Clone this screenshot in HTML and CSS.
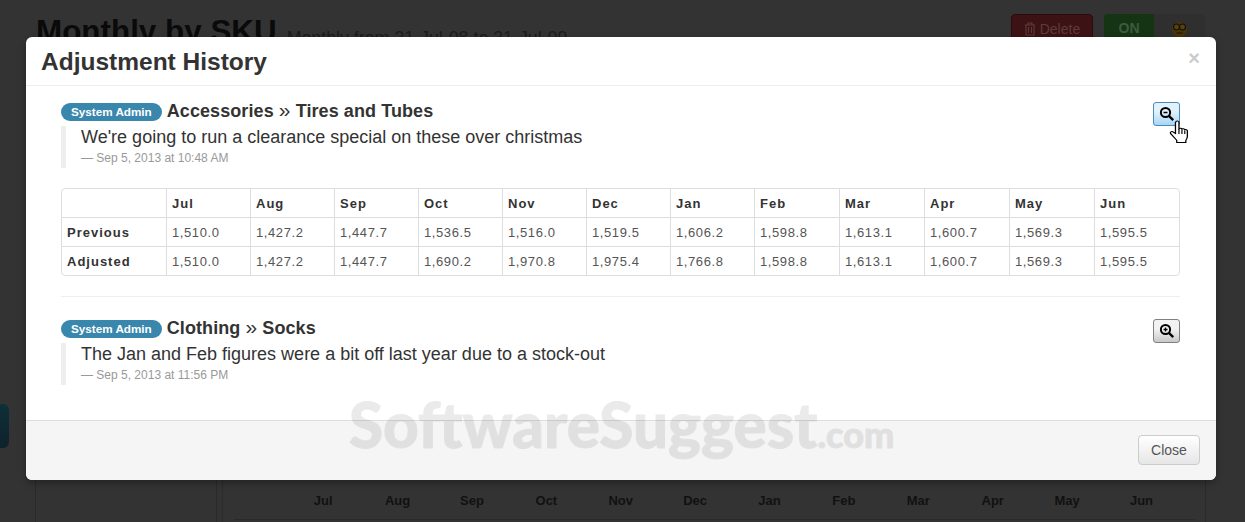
FILE: index.html
```html
<!DOCTYPE html>
<html lang="en">
<head>
    <meta charset="UTF-8">
    <meta name="viewport" content="width=device-width, initial-scale=1.0">
    <title>Adjustment History</title>
    <link rel="stylesheet" href="styles.css">
</head>
<body>
    <div class="page">
        <div class="page-head">
            <h1>Monthly by SKU</h1>
            <span class="page-sub">Monthly from 31-Jul-08 to 31-Jul-09</span>
            <button class="btn-delete">
                <svg class="trash" viewBox="0 0 12 14" width="12" height="14"><path d="M1 3h10M4 3V1h4v2M2 3v10h8V3M4.500 5v6M7.500 5v6" fill="none" stroke="currentColor" stroke-width="1.100"/></svg>
                Delete
            </button>
            <div class="toggle">
                <span class="toggle-on">ON</span>
                <span class="toggle-off">
                    <svg viewBox="0 0 18 18" width="18" height="18"><circle cx="8.500" cy="9.500" r="7.500" fill="#4d3500"/><circle cx="5.500" cy="7" r="3" fill="#54420f" stroke="#111" stroke-width="1.100"/><circle cx="11.500" cy="7" r="3" fill="#54420f" stroke="#111" stroke-width="1.100"/><path d="M5.500 13h6" stroke="#111"/></svg>
                </span>
            </div>
        </div>
        <div class="page-main">
            <div class="side-col"></div>
            <div class="main-col">
                <div class="month-row">
                    <span>Jul</span><span>Aug</span><span>Sep</span><span>Oct</span><span>Nov</span><span>Dec</span><span>Jan</span><span>Feb</span><span>Mar</span><span>Apr</span><span>May</span><span>Jun</span>
                </div>
            </div>
        </div>
    </div>
    <div class="side-tab"></div>

    <div class="modal">
        <div class="modal-header">
            <h3>Adjustment History</h3>
            <span class="modal-x">×</span>
        </div>
        <div class="modal-body">
            <div class="entry">
                <div class="entry-top">
                    <div>
                        <div class="entry-title">
                            <span class="pill">System Admin</span>
                            <span class="crumb">Accessories <span class="sep">»</span> Tires and Tubes</span>
                        </div>
                        <div class="quote">
                            <p>We're going to run a clearance special on these over christmas</p>
                            <small>— Sep 5, 2013 at 10:48 AM</small>
                        </div>
                    </div>
                    <button class="zoom-btn zoom-btn-hover">
                        <svg viewBox="0 0 16 16" width="16" height="16"><circle cx="6.500" cy="6.500" r="4.600" fill="none" stroke="#000" stroke-width="2"/><path d="M4.500 6.500h4" stroke="#000" stroke-width="1.400"/><path d="M10 10l4.200 4.200" stroke="#000" stroke-width="2.400"/></svg>
                    </button>
                </div>
                <table class="adj-table">
                    <thead>
                        <tr><th></th><th>Jul</th><th>Aug</th><th>Sep</th><th>Oct</th><th>Nov</th><th>Dec</th><th>Jan</th><th class="wide">Feb</th><th class="wide">Mar</th><th class="wide">Apr</th><th class="wide">May</th><th class="wide">Jun</th></tr>
                    </thead>
                    <tbody>
                        <tr><th>Previous</th><td>1,510.0</td><td>1,427.2</td><td>1,447.7</td><td>1,536.5</td><td>1,516.0</td><td>1,519.5</td><td>1,606.2</td><td>1,598.8</td><td>1,613.1</td><td>1,600.7</td><td>1,569.3</td><td>1,595.5</td></tr>
                        <tr><th>Adjusted</th><td>1,510.0</td><td>1,427.2</td><td>1,447.7</td><td>1,690.2</td><td>1,970.8</td><td>1,975.4</td><td>1,766.8</td><td>1,598.8</td><td>1,613.1</td><td>1,600.7</td><td>1,569.3</td><td>1,595.5</td></tr>
                    </tbody>
                </table>
            </div>
            <hr class="divider">
            <div class="entry">
                <div class="entry-top">
                    <div>
                        <div class="entry-title">
                            <span class="pill">System Admin</span>
                            <span class="crumb">Clothing <span class="sep">»</span> Socks</span>
                        </div>
                        <div class="quote">
                            <p>The Jan and Feb figures were a bit off last year due to a stock-out</p>
                            <small>— Sep 5, 2013 at 11:56 PM</small>
                        </div>
                    </div>
                    <button class="zoom-btn">
                        <svg viewBox="0 0 16 16" width="16" height="16"><circle cx="6.500" cy="6.500" r="4.600" fill="none" stroke="#000" stroke-width="2"/><path d="M4.500 6.500h4M6.500 4.500v4" stroke="#000" stroke-width="1.300"/><path d="M10 10l4.200 4.200" stroke="#000" stroke-width="2.400"/></svg>
                    </button>
                </div>
            </div>
        </div>
        <div class="modal-footer">
            <button class="btn-close">Close</button>
        </div>
    </div>

    <div class="watermark">SoftwareSuggest<span>.com</span></div>

    <svg class="hand-cursor" viewBox="0 0 17 24" width="22" height="24" preserveAspectRatio="none">
        <path d="M5.500 1.500c.9-.9 2.200-.4 2.200.9v6.200c.5-.6 2-.6 2.300.4.6-.5 1.900-.3 2.200.7.700-.3 2 .1 2 1.400v5.200c0 2-.6 3.100-1.200 4.200v2H6v-2.200L1.300 13.600c-.8-1.100.4-2.500 1.700-1.800l2 1.700V2.400z" fill="#fff" stroke="#000" stroke-width="1"/>
        <path d="M7.700 9v5M10 9.500v4.500M12.200 10.500V14" stroke="#000" stroke-width=".9" fill="none"/>
    </svg>
</body>
</html>
```

FILE: styles.css
```css
html, body {
    margin: 0;
    height: 100%;
    overflow: hidden;
}

body {
    font-family: "Liberation Sans", Arial, sans-serif;
    background-color: #333;
    color: #333;
}

/* dimmed page behind the modal */
.page {
    height: 522px;
    display: flex;
    flex-direction: column;
    background-color: #333;
}

.page-head {
    display: flex;
    align-items: flex-start;
    height: 76px;
    padding: 14px 40px 0 36px;
    flex-shrink: 0;
}

.page-head h1 {
    margin: 0;
    font-size: 31.400px;
    line-height: 36px;
    color: #0a0a0a;
}

.page-sub {
    margin: 14px 0 0 10px;
    font-size: 17.800px;
    color: #1c1c1c;
    flex-grow: 1;
}

.btn-delete {
    width: 82px;
    height: 30px;
    margin-right: 11px;
    padding: 0;
    font: 14px "Liberation Sans", Arial, sans-serif;
    color: #5d3a3d;
    background-color: #3d1214;
    border: 1px solid #2a0b0c;
    border-radius: 4px;
}

.trash {
    vertical-align: -2px;
}

.toggle {
    display: flex;
    width: 101px;
    height: 30px;
    border-radius: 4px;
    overflow: hidden;
    background-color: #2f2f2f;
}

.toggle-on {
    width: 50px;
    padding-top: 6px;
    text-align: center;
    font-size: 14px;
    font-weight: bold;
    color: #3f5a3f;
    background-color: #143414;
}

.toggle-off {
    flex-grow: 1;
    padding-top: 6px;
    text-align: center;
}

.page-main {
    display: flex;
    flex-grow: 1;
    margin: 0 39px 0 35px;
    border-left: 1px solid #2a2a2a;
    border-right: 1px solid #2a2a2a;
}

.side-col {
    width: 180px;
    flex-shrink: 0;
    border-right: 1px solid #2a2a2a;
}

.main-col {
    flex-grow: 1;
    margin-left: 5px;
    padding: 416px 10px 0 11px;
    border-left: 1px solid #2a2a2a;
    margin-top: -13px;
}

.month-row {
    display: grid;
    grid-template-columns: repeat(12, 74.400px);
    padding: 0 0 10px 52px;
    border-bottom: 1px solid #2a2a2a;
    font-size: 13px;
    font-weight: bold;
    line-height: 16px;
    color: #111;
    text-align: center;
}

.side-tab {
    position: absolute;
    left: 0;
    top: 404px;
    width: 9px;
    height: 44px;
    border-radius: 0 6px 6px 0;
    background: linear-gradient(#0e3039, #0e222a);
}

/* modal */
.modal {
    position: absolute;
    left: 26px;
    top: 37px;
    width: 1190px;
    height: 443px;
    display: flex;
    flex-direction: column;
    background-color: #fff;
    border-radius: 6px;
    box-shadow: 0 3px 7px rgba(0, 0, 0, 0.3);
    overflow: hidden;
}

.modal-header {
    display: flex;
    justify-content: space-between;
    height: 48px;
    padding: 0 16px 0 15px;
    border-bottom: 1px solid #eee;
    flex-shrink: 0;
}

.modal-header h3 {
    margin: 0;
    font-size: 24.500px;
    line-height: 49px;
    color: #333;
}

.modal-x {
    font-size: 20px;
    font-weight: bold;
    line-height: 42px;
    color: #ccc;
}

.modal-body {
    flex-grow: 1;
    padding: 17px 36px 0 35px;
}

.entry-top {
    display: flex;
    justify-content: space-between;
    align-items: flex-start;
}

.entry-title {
    display: flex;
    align-items: center;
    gap: 5px;
    height: 18px;
    color: #333;
}

.crumb {
    margin-top: -3px;
    font-size: 18px;
    line-height: 18px;
    font-weight: bold;
    letter-spacing: 0.08px;
}

.sep {
    font-size: 21px;
    line-height: 0;
    font-weight: normal;
}

.pill {
    padding: 0 10px;
    font-size: 11.700px;
    font-weight: bold;
    line-height: 18px;
    color: #fff;
    background-color: #3a87ad;
    border-radius: 9px;
}

.quote {
    margin-top: 5px;
    padding-left: 15px;
    height: 42px;
    border-left: 5px solid #eee;
}

.quote p {
    margin: 0;
    font-size: 18px;
    line-height: 22px;
}

.quote small {
    display: block;
    margin-top: 1px;
    font-size: 12px;
    line-height: 18px;
    color: #999;
}

.zoom-btn {
    width: 27px;
    height: 24px;
    margin-top: -1px;
    padding: 0;
    display: flex;
    justify-content: center;
    align-items: center;
    background: linear-gradient(#f2f2f2 40%, #c8c8c8);
    border: 1px solid #808080;
    border-radius: 3px;
}

.zoom-btn-hover {
    background: linear-gradient(#e3f1fb 40%, #a6d5f7);
    border-color: #4a8cb8;
}

.adj-table {
    width: 100%;
    margin-top: 20px;
    table-layout: fixed;
    border-collapse: separate;
    border-spacing: 0;
    border: 1px solid #ddd;
    border-radius: 4px;
    font-size: 13px;
    letter-spacing: 0.6px;
    color: #555;
}

.adj-table th,
.adj-table td {
    box-sizing: border-box;
    width: 84px;
    height: 29px;
    padding: 0 5px;
    text-align: left;
    border-left: 1px solid #ddd;
    border-top: 1px solid #ddd;
}

.adj-table th {
    color: #333;
    letter-spacing: 1px;
}

.adj-table thead th {
    height: 28px;
    border-top: 0;
}

.adj-table th:first-child {
    width: 104px;
    border-left: 0;
}

.adj-table th.wide {
    width: 85px;
}

.divider {
    height: 1px;
    margin: 20px 0 23px;
    border: 0;
    background-color: #eee;
}

.modal-footer {
    display: flex;
    justify-content: flex-end;
    height: 45px;
    padding: 14px 16px 0 0;
    background-color: #f5f5f5;
    border-top: 1px solid #ddd;
    flex-shrink: 0;
}

.btn-close {
    width: 62px;
    height: 30px;
    padding: 0;
    font: 14px "Liberation Sans", Arial, sans-serif;
    color: #555;
    background: linear-gradient(#fff, #e6e6e6);
    border: 1px solid #ccc;
    border-radius: 4px;
}

/* stock site stamp over the screenshot */
.watermark {
    position: absolute;
    left: 349px;
    top: 389px;
    font-family: Lato, "Liberation Sans", sans-serif;
    font-size: 62px;
    font-weight: 900;
    line-height: 70px;
    color: #000;
    -webkit-text-stroke: 1px #000;
    opacity: 0.08;
}

.watermark span {
    font-size: 36px;
}

.hand-cursor {
    position: absolute;
    left: 1169px;
    top: 120px;
}
```
